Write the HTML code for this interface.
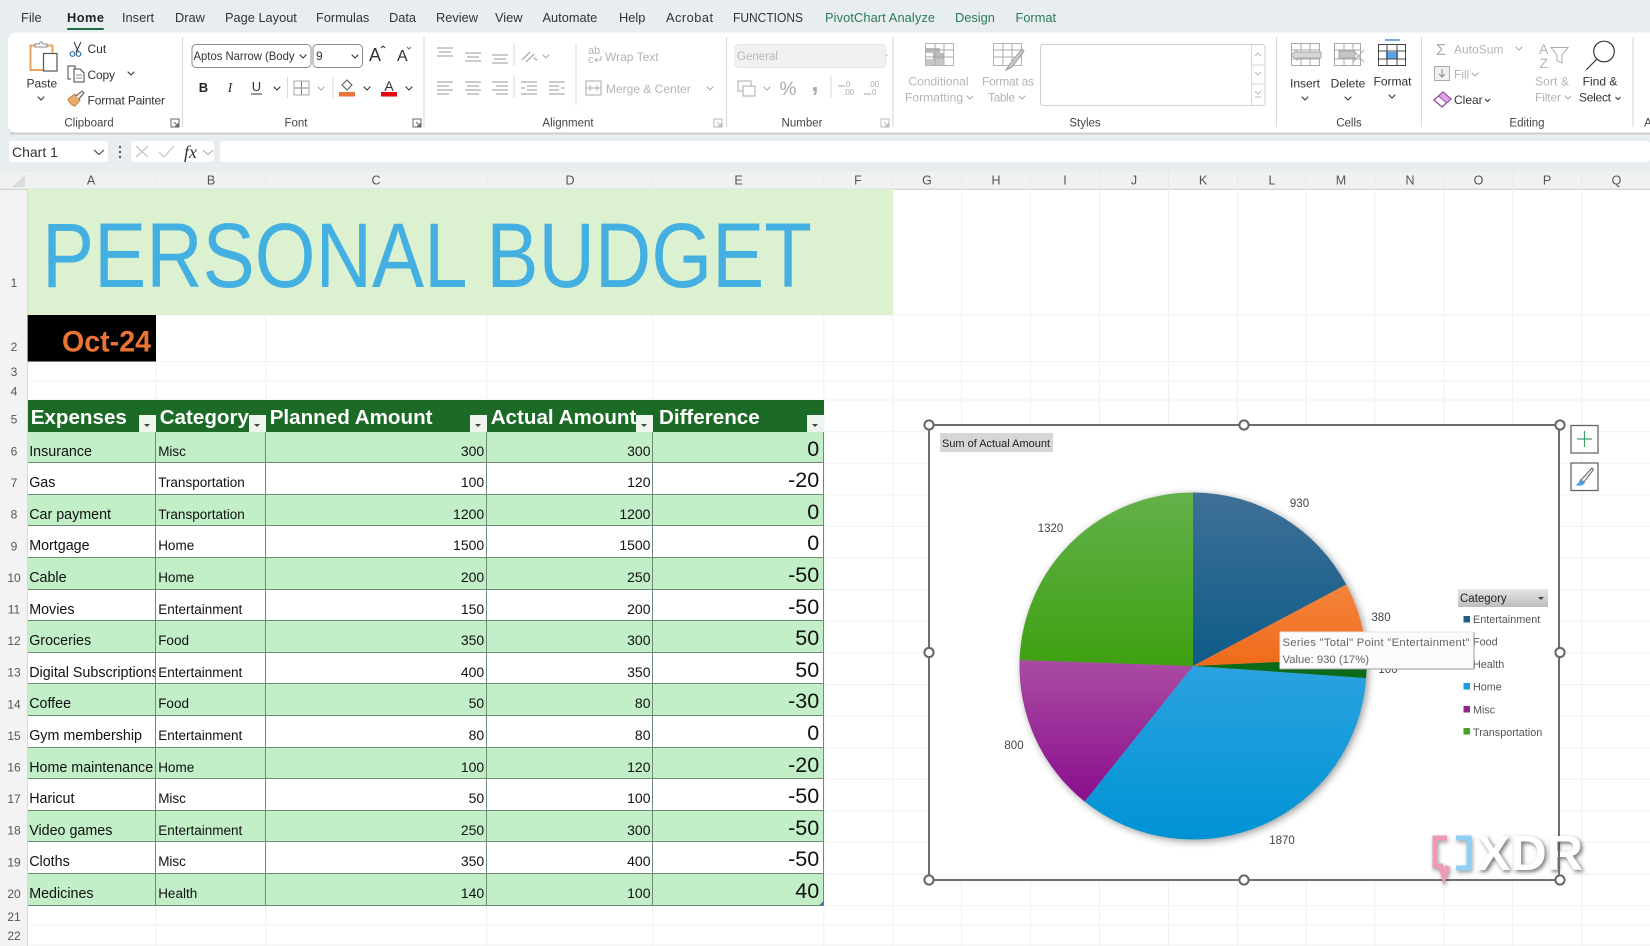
<!DOCTYPE html>
<html lang="en"><head><meta charset="utf-8"><title>Personal Budget</title>
<style>
html,body{margin:0;padding:0;width:1650px;height:946px;overflow:hidden;background:#fff;font-family:"Liberation Sans",sans-serif}
svg{position:absolute;left:0;top:0}
svg text{font-family:"Liberation Sans",sans-serif}
#tbl{position:absolute;left:27.7px;top:400px;display:grid;grid-template-columns:128px 110px 221px 166.3px 170.7px;grid-auto-rows:31.6px;color:#111}
#tbl div{box-sizing:border-box;white-space:nowrap;overflow:hidden;border-right:1px solid #6f8a72;border-bottom:1px solid #6f8a72;font-size:14.3px;line-height:40px;padding-left:1.5px}
#tbl .h{background:#1b6a25;color:#fff;font-weight:bold;font-size:20.6px;line-height:36px;border:0;padding-left:3px;height:31.7px;position:relative;overflow:visible}
#tbl .h.p{padding-left:4px}
#tbl .h.q{padding-left:6px}
#tbl .h i{position:absolute;right:0;bottom:0;width:16.5px;height:17px;background:#eef5ef}
#tbl .h i:after{content:"";position:absolute;left:5px;top:9px;border:3px solid transparent;border-top:3px solid #444}
#tbl .g{background:#c2eec8}
#tbl .c{font-size:13.5px;padding-left:2.5px;line-height:40px}
#tbl .n{text-align:right;padding:0 1.5px 0 0;font-size:14px;line-height:38px}
#tbl .d{text-align:right;padding:0 3.5px 0 0;font-size:21.5px;line-height:35px}
</style></head><body>

<svg width="1650" height="946" viewBox="0 0 1650 946" style="z-index:1">
<!-- chrome -->
<rect x="0" y="0" width="1650" height="172" fill="#e8edf0"/>
<rect x="0" y="172" width="1650" height="17" fill="#f0f2f2"/>
<rect x="0" y="189" width="27.7" height="757" fill="#f3f3f3"/>
<path d="M25 175V187H12Z" fill="#dcdcdc"/>
<path d="M0 189.3H1650" stroke="#c6cbc9" stroke-width="1"/>
<path d="M27.5 189V946" stroke="#d6d6d6"/>
<!-- grid -->
<path d="M28 315H1650M28 361.5H1650M28 381H1650M28 400H1650M824 431.7H1650M824 463.3H1650M824 494.9H1650M824 526.5H1650M824 558.1H1650M824 589.7H1650M824 621.3H1650M824 652.9H1650M824 684.5H1650M824 716.1H1650M824 747.7H1650M824 779.3H1650M824 810.9H1650M824 842.5H1650M824 874.1H1650M28 905.7H1650M28 925H1650M28 945H1650M156 315V400M156 906V946M265.8 315V400M265.8 906V946M486.8 315V400M486.8 906V946M652.7 315V400M652.7 906V946M823.8 315V946M892.8 189V946M961.6 189V946M1030.5 189V946M1099.5 189V946M1168.5 189V946M1237.5 189V946M1306.2 189V946M1375 189V946M1444 189V946M1512.7 189V946M1581.7 189V946" stroke="#f1f1f1" stroke-width="1" fill="none"/>
<path d="M156 172V189M265.8 172V189M486.8 172V189M652.7 172V189M823.8 172V189M892.8 172V189M961.6 172V189M1030.5 172V189M1099.5 172V189M1168.5 172V189M1237.5 172V189M1306.2 172V189M1375 172V189M1444 172V189M1512.7 172V189M1581.7 172V189" stroke="#e7e9e9"/>
<!-- column letters -->
<g font-size="12.5" fill="#555" text-anchor="middle">
<text x="91" y="184.5">A</text><text x="211" y="184.5">B</text><text x="376" y="184.5">C</text><text x="570" y="184.5">D</text><text x="738.5" y="184.5">E</text><text x="858" y="184.5">F</text><text x="927" y="184.5">G</text><text x="996" y="184.5">H</text><text x="1065" y="184.5">I</text><text x="1134" y="184.5">J</text><text x="1203" y="184.5">K</text><text x="1272" y="184.5">L</text><text x="1341" y="184.5">M</text><text x="1410" y="184.5">N</text><text x="1478.5" y="184.5">O</text><text x="1547" y="184.5">P</text><text x="1616.5" y="184.5">Q</text>
</g>
<!-- row numbers -->
<g font-size="12" fill="#555" text-anchor="middle">
<text x="14" y="287">1</text><text x="14" y="351">2</text><text x="14" y="376">3</text><text x="14" y="395.5">4</text><text x="14" y="423.5">5</text>
<text x="14" y="455.5">6</text><text x="14" y="487">7</text><text x="14" y="518.7">8</text><text x="14" y="550.3">9</text><text x="14" y="581.9">10</text><text x="14" y="613.5">11</text><text x="14" y="645.1">12</text><text x="14" y="676.7">13</text><text x="14" y="708.3">14</text><text x="14" y="739.9">15</text><text x="14" y="771.5">16</text><text x="14" y="803.1">17</text><text x="14" y="834.7">18</text><text x="14" y="866.3">19</text><text x="14" y="897.9">20</text><text x="14" y="921">21</text><text x="14" y="940">22</text>
</g>
<!-- title -->
<rect x="27.7" y="189" width="865" height="126" fill="#dcf1d0"/>
<text x="42" y="287" font-size="92" fill="#44b0e2" textLength="770" lengthAdjust="spacingAndGlyphs">PERSONAL BUDGET</text>
<rect x="27.7" y="315" width="128.3" height="46.5" fill="#000"/>
<text x="62" y="351.7" font-size="30" font-weight="bold" fill="#ea7434" textLength="89" lengthAdjust="spacingAndGlyphs">Oct-24</text>

<!-- tabs -->
<g font-size="12.8" fill="#333">
<text x="21" y="22">File</text><text x="67" y="22" font-weight="bold" fill="#222" textLength="37">Home</text><text x="122" y="22">Insert</text><text x="175" y="22">Draw</text><text x="225" y="22">Page Layout</text><text x="316" y="22">Formulas</text><text x="389" y="22">Data</text><text x="436" y="22">Review</text><text x="495" y="22">View</text><text x="542.5" y="22">Automate</text><text x="619" y="22">Help</text><text x="666" y="22" textLength="47">Acrobat</text><text x="733" y="22" textLength="70" lengthAdjust="spacingAndGlyphs">FUNCTIONS</text>
<g fill="#2c7a57"><text x="825" y="22" textLength="110">PivotChart Analyze</text><text x="955" y="22">Design</text><text x="1015.5" y="22">Format</text></g>
</g>
<rect x="67" y="28" width="37" height="2" rx="1" fill="#1d6b40"/>
<!-- ribbon -->
<rect x="10" y="132" width="1640" height="2.5" fill="#ccd0d2"/>
<rect x="8" y="32.5" width="1660" height="100" rx="8" fill="#fff"/>
<path d="M182.5 37V127M424 37V127M726.5 37V127M893 37V127M1276.5 37V127M1421.5 37V127M1633 37V127" stroke="#dcdcdc" stroke-width="1.2"/>
<path d="M287.5 77V98M333 77V98M514 43V66M514 76V98M576 43V105M831 76V98" stroke="#dadada" stroke-width="1"/>
<!-- clipboard icons -->
<path d="M36 45.5H30.5V70H43" fill="none" stroke="#e5a65c" stroke-width="2"/><path d="M47 45.5H52.5V53" fill="none" stroke="#e5a65c" stroke-width="2"/>
<path d="M35 47V44H39Q41 40 43 44H47V47Z" fill="#fff" stroke="#8a8a8a"/>
<rect x="43.5" y="53.5" width="13.5" height="17.5" fill="#fff" stroke="#555" stroke-width="1.2"/>
<path d="M74 42L78.5 52M81 42L76 52" stroke="#333" fill="none"/><circle cx="72.5" cy="54" r="2.3" fill="none" stroke="#2d6da8" stroke-width="1.2"/><circle cx="78.5" cy="54" r="2.3" fill="none" stroke="#2d6da8" stroke-width="1.2"/>
<path d="M71 79H68V66H75V69M74 69H80L84 73V82H74Z" fill="#fff" stroke="#444"/><path d="M76 75H82M76 78H82" stroke="#888"/>
<path d="M68 99L75 94L80 100L75 106Q70 105 68 99Z" fill="#e9ad6a" stroke="#c9792f"/><path d="M76 96L82 91L84 93L79 99" fill="#eee" stroke="#555"/>
<g font-size="12" fill="#333">
<text x="26.5" y="87.5">Paste</text><text x="87.5" y="53">Cut</text><text x="87.5" y="79" textLength="27.5">Copy</text><text x="87.5" y="104.5" textLength="77.5">Format Painter</text>
</g>
<!-- labels -->
<g font-size="11.5" fill="#444" text-anchor="middle">
<text x="89" y="126.5">Clipboard</text><text x="296" y="126.5">Font</text><text x="568" y="126.5">Alignment</text><text x="802" y="126.5">Number</text><text x="1085" y="126.5">Styles</text><text x="1349" y="126.5">Cells</text><text x="1527" y="126.5">Editing</text><text x="1648" y="126.5">A</text>
</g>
<!-- launchers -->
<g fill="none" stroke-width="1"><path d="M171 119H179V127H171ZM174 122L178 126M178 123V126H175" stroke="#666"/><path d="M413 119H421V127H413ZM416 122L420 126M420 123V126H417" stroke="#666"/><path d="M714 119H722V127H714ZM717 122L721 126M721 123V126H718" stroke="#bbb"/><path d="M881 119H889V127H881ZM884 122L888 126M888 123V126H885" stroke="#bbb"/></g>
<!-- font -->
<rect x="192" y="44.5" width="119" height="23" rx="4" fill="#fff" stroke="#8c8c8c"/><rect x="313" y="44.5" width="49.5" height="23" rx="4" fill="#fff" stroke="#8c8c8c"/>
<text x="193.5" y="60" font-size="12" fill="#333" textLength="101" lengthAdjust="spacingAndGlyphs">Aptos Narrow (Body</text><text x="316" y="60" font-size="12" fill="#333">9</text>
<g fill="none" stroke="#333" stroke-width="1.1" stroke-linecap="round"><path d="M300 55l3 3l3-3M352 55l3 3l3-3M128 72l3 3l3-3M38 97l3 3l3-3M274 87l3 3l3-3M364 87l3 3l3-3M406 87l3 3l3-3M1302 97l3 3l3-3M1345 97l3 3l3-3M1389 95l3 3l3-3"/></g>
<g fill="none" stroke="#aaa" stroke-width="1" stroke-linecap="round"><path d="M318 87l3 3l3-3M543 55l3 3l3-3M707 87l3 3l3-3M764 87l3 3l3-3M881 55l3 3l3-3M1516 47l3 3l3-3M1472 73l3 3l3-3M967 96l3 3l3-3M1019 96l3 3l3-3M1565 96l3 3l3-3"/></g>
<text x="369" y="61" font-size="18" fill="#333">A</text><text x="397" y="61" font-size="16" fill="#333">A</text>
<path d="M381 48l2-2l2 2" stroke="#333" fill="none"/><path d="M407 47l2 2l2-2" stroke="#3a7ca5" fill="none"/>
<text x="203.5" y="92" font-size="13" font-weight="bold" fill="#222" text-anchor="middle">B</text><text x="230" y="92" font-size="14" font-style="italic" fill="#333" text-anchor="middle" style="font-family:'Liberation Serif',serif">I</text><text x="256.5" y="91" font-size="13" fill="#333" text-anchor="middle">U</text><path d="M251 94H262" stroke="#333"/>
<rect x="294" y="81" width="15" height="14" fill="none" stroke="#aaa"/><path d="M301.5 81V95M294 88H309" stroke="#888"/>
<path d="M342 85L347 80L352 85L347 90Z" fill="#fff" stroke="#555"/><rect x="339" y="92" width="16" height="4.5" fill="#e8743a"/>
<text x="389" y="91" font-size="14" fill="#333" text-anchor="middle">A</text><rect x="381" y="92" width="16" height="4.5" fill="#e60012"/>
<!-- alignment -->
<g stroke="#999" stroke-width="1.1" fill="none">
<path d="M437 48H453M439 52H451M437 56H453"/><path d="M465 53H481M467 57H479M465 61H481"/><path d="M492 55H508M494 59H506M492 63H508"/>
<path d="M437 82H453M437 86H449M437 90H453M437 94H449"/><path d="M465 82H481M467 86H479M465 90H481M467 94H479"/><path d="M492 82H508M496 86H508M492 90H508M496 94H508"/>
<path d="M521 82H537M527 86H537M527 90H537M521 94H537M525 88H521"/><path d="M549 82H565M549 86H559M549 90H559M549 94H565M561 88H565"/>
<path d="M522 60L530 52M526 62L534 54M534 58L537 60"/>
</g>
<g fill="#b4b4b4" font-size="12"><text x="605" y="61">Wrap Text</text><text x="606" y="93">Merge &amp; Center</text><text x="588" y="54" font-size="11">ab</text><text x="588" y="63" font-size="11">c</text></g>
<path d="M595 60H601V56M595 60l2-2M595 60l2 2" stroke="#b4b4b4" fill="none"/>
<rect x="586" y="81" width="15" height="14" fill="none" stroke="#aaa"/><path d="M586 88H601M590 85V91M597 85V91" stroke="#aaa"/>
<!-- number -->
<rect x="735" y="44.5" width="150.5" height="23" rx="4" fill="#f1f1f1" stroke="#e6e6e6"/>
<text x="737" y="60" font-size="11.5" fill="#b8b8b8">General</text>
<rect x="738" y="81" width="13" height="10" fill="none" stroke="#aaa"/><rect x="743" y="86" width="12" height="10" fill="#fff" stroke="#aaa"/>
<text x="788" y="95" font-size="19" fill="#aaa" text-anchor="middle">%</text><text x="815" y="91" font-size="26" font-weight="bold" fill="#aaa" text-anchor="middle">,</text>
<g font-size="8" fill="#aaa"><text x="846" y="87">0</text><text x="843" y="95">.00</text><text x="868" y="87">.00</text><text x="872" y="95">0</text></g><path d="M838 86H845M864 94H871" stroke="#aaa"/>
<!-- styles -->
<g fill="#dcdcdc" stroke="#b5b5b5"><rect x="925.5" y="43.5" width="28" height="22" fill="#fff"/><rect x="926" y="48" width="14" height="5" stroke="none" fill="#bbb"/><rect x="933" y="53" width="11" height="6" stroke="none" fill="#bbb"/><rect x="926" y="59" width="18" height="6" stroke="none" fill="#c8c8c8"/></g>
<path d="M925 50H953M925 57H953M935 44V66M944 44V66" stroke="#aaa" fill="none"/>
<rect x="993.5" y="43.5" width="28" height="22" fill="#fff" stroke="#b5b5b5"/><path d="M993 50H1021M993 57H1021M1003 44V66M1012 44V66" stroke="#aaa"/><path d="M1006 70L1010 64L1022 49L1024 51L1012 67Z" fill="#ccc" stroke="#999"/>
<g font-size="12" fill="#b4b4b4" text-anchor="middle"><text x="938.5" y="85.5" textLength="60">Conditional</text><text x="934" y="101.5" textLength="58">Formatting</text><text x="1008" y="85.5" textLength="52">Format as</text><text x="1001.5" y="101.5" textLength="27">Table</text></g>
<rect x="1040.5" y="44.5" width="224.5" height="61" rx="3" fill="#fff" stroke="#cfcfcf"/>
<path d="M1251.5 45V105M1252 65H1265M1252 84H1265" stroke="#d8d8d8" fill="none"/><g fill="none" stroke="#bbb"><path d="M1255 56l3-3l3 3M1255 72l3 3l3-3M1255 91l3 3l3-3M1255 97H1261"/></g>
<!-- cells -->
<g stroke="#a8a8a8" fill="none"><rect x="1291.5" y="43.5" width="28" height="22"/><path d="M1291 50H1319M1291 59H1319M1301 44V66M1310 44V66"/><path d="M1291 55L1297 50V52H1321V58H1297V60Z" fill="#d6d6d6"/>
<rect x="1334.5" y="43.5" width="26" height="22"/><path d="M1334 50H1360M1334 59H1360M1344 44V66M1353 44V66"/><rect x="1339" y="51" width="16" height="7" fill="#c4c4c4"/><path d="M1353 50L1364 62M1364 50L1353 62" stroke="#aaa"/></g>
<rect x="1378.5" y="44.5" width="27" height="21" fill="#fff" stroke="#444"/><rect x="1386" y="52" width="12" height="7" fill="#57a3ec"/><path d="M1378 51H1406M1378 59H1406M1387 45V66M1397 45V66" stroke="#444"/><path d="M1385 40H1400" stroke="#3a78b8" stroke-width="1.3"/>
<g font-size="12" fill="#333" text-anchor="middle"><text x="1305" y="87.5">Insert</text><text x="1348" y="87.5">Delete</text><text x="1392.5" y="85.5">Format</text><text x="1600" y="85.5">Find &amp;</text><text x="1595" y="101.5" textLength="32">Select</text></g>
<path d="M1615.5 97l2.5 2.5l2.5-2.5" stroke="#333" fill="none"/>
<!-- editing -->
<text x="1436" y="55" font-size="16" fill="#aaa">Σ</text>
<g font-size="12" fill="#b4b4b4"><text x="1454" y="53.5">AutoSum</text><text x="1454" y="78.5">Fill</text></g>
<rect x="1434.5" y="66.5" width="15" height="14" fill="#f0f0f0" stroke="#aaa"/><path d="M1442 69V76M1439 74l3 3l3-3" stroke="#888" fill="none"/>
<path d="M1434 100L1443 92L1451 99L1442 107Z" fill="#fff" stroke="#9a4fb0" stroke-width="1.4"/><path d="M1438.5 96L1443 92L1451 99L1446.5 103Z" fill="#dba6e3" stroke="#9a4fb0"/>
<text x="1454" y="104" font-size="12" fill="#333">Clear</text><path d="M1485 99l2.5 2.5l2.5-2.5" stroke="#333" fill="none"/>
<g font-size="14" fill="#b4b4b4"><text x="1539" y="54">A</text><text x="1539.5" y="68">Z</text></g>
<path d="M1551 47.5H1568L1562 55V63L1557 60.5V55Z" fill="#fff" stroke="#aaa"/>
<g font-size="12" fill="#b4b4b4" text-anchor="middle"><text x="1552" y="85.5" textLength="34">Sort &amp;</text><text x="1548" y="101.5" textLength="26">Filter</text></g>
<circle cx="1604" cy="51.5" r="10.3" fill="none" stroke="#333" stroke-width="1.2"/><path d="M1597 59L1586 70" stroke="#333" stroke-width="1.2"/>
<!-- formula bar -->
<rect x="9" y="141" width="99" height="21" rx="3" fill="#fff"/><rect x="131" y="141" width="83" height="21" rx="3" fill="#fff"/><rect x="220" y="141" width="1430" height="21" rx="3" fill="#fff"/>
<text x="12" y="157" font-size="14" fill="#333">Chart 1</text><path d="M94 150l5 4.5l5-4.5" fill="none" stroke="#555" stroke-width="1.2"/>
<circle cx="120" cy="147" r="1.1" fill="#444"/><circle cx="120" cy="152" r="1.1" fill="#444"/><circle cx="120" cy="157" r="1.1" fill="#444"/>
<path d="M136 146L148 157M148 146L136 157" stroke="#c4c4c4" stroke-width="1.2"/><path d="M159 152L164 157L174 146" fill="none" stroke="#c4c4c4" stroke-width="1.2"/>
<text x="184" y="158" font-size="18" font-style="italic" fill="#333" style="font-family:'Liberation Serif',serif">fx</text><path d="M203 150l5 4.5l5-4.5" fill="none" stroke="#aaa"/>
</svg>

<div id="tbl" style="z-index:2">
<div class="h">Expenses<i></i></div><div class="h p">Category<i></i></div><div class="h p">Planned Amount<i></i></div><div class="h p">Actual Amount<i></i></div><div class="h q">Difference<i></i></div>
<div class="g">Insurance</div><div class="g c">Misc</div><div class="g n">300</div><div class="g n">300</div><div class="g d">0</div>
<div>Gas</div><div class="c">Transportation</div><div class="n">100</div><div class="n">120</div><div class="d">-20</div>
<div class="g">Car payment</div><div class="g c">Transportation</div><div class="g n">1200</div><div class="g n">1200</div><div class="g d">0</div>
<div>Mortgage</div><div class="c">Home</div><div class="n">1500</div><div class="n">1500</div><div class="d">0</div>
<div class="g">Cable</div><div class="g c">Home</div><div class="g n">200</div><div class="g n">250</div><div class="g d">-50</div>
<div>Movies</div><div class="c">Entertainment</div><div class="n">150</div><div class="n">200</div><div class="d">-50</div>
<div class="g">Groceries</div><div class="g c">Food</div><div class="g n">350</div><div class="g n">300</div><div class="g d">50</div>
<div>Digital Subscriptions</div><div class="c">Entertainment</div><div class="n">400</div><div class="n">350</div><div class="d">50</div>
<div class="g">Coffee</div><div class="g c">Food</div><div class="g n">50</div><div class="g n">80</div><div class="g d">-30</div>
<div>Gym membership</div><div class="c">Entertainment</div><div class="n">80</div><div class="n">80</div><div class="d">0</div>
<div class="g">Home maintenance</div><div class="g c">Home</div><div class="g n">100</div><div class="g n">120</div><div class="g d">-20</div>
<div>Haricut</div><div class="c">Misc</div><div class="n">50</div><div class="n">100</div><div class="d">-50</div>
<div class="g">Video games</div><div class="g c">Entertainment</div><div class="g n">250</div><div class="g n">300</div><div class="g d">-50</div>
<div>Cloths</div><div class="c">Misc</div><div class="n">350</div><div class="n">400</div><div class="d">-50</div>
<div class="g">Medicines</div><div class="g c">Health</div><div class="g n">140</div><div class="g n">100</div><div class="g d">40</div>
</div>

<svg width="1650" height="946" viewBox="0 0 1650 946" style="z-index:3">
<defs>
<linearGradient id="a" x1="0" y1="0" x2="0" y2="1"><stop offset="0" stop-color="#3f7097"/><stop offset="1" stop-color="#0d5c88"/></linearGradient>
<linearGradient id="b" x1="0" y1="0" x2="0" y2="1"><stop offset="0" stop-color="#f5853d"/><stop offset="1" stop-color="#ef6a1a"/></linearGradient>
<linearGradient id="c" x1="0" y1="0" x2="0" y2="1"><stop offset="0" stop-color="#2ba2e0"/><stop offset="1" stop-color="#0093d4"/></linearGradient>
<linearGradient id="d" x1="0" y1="0" x2="0" y2="1"><stop offset="0" stop-color="#aa4ca2"/><stop offset="1" stop-color="#8a0e8e"/></linearGradient>
<linearGradient id="e" x1="0" y1="0" x2="0" y2="1"><stop offset="0" stop-color="#63b14b"/><stop offset="1" stop-color="#3ea011"/></linearGradient>
<linearGradient id="f" x1="0" y1="0" x2="0" y2="1"><stop offset="0" stop-color="#e6e6e6"/><stop offset="1" stop-color="#bdbdbd"/></linearGradient>
</defs>
<path d="M823.5 901V905.5H819Z" fill="#3a78a8"/>
<rect x="929" y="425" width="630" height="455" fill="#fff" stroke="#6e6e6e" stroke-width="2"/>
<rect x="940" y="433" width="113" height="19" fill="#d6d6d6"/>
<text x="942" y="447" font-size="11" fill="#222" textLength="108">Sum of Actual Amount</text>
<g style="filter:drop-shadow(2px 2px 4px rgba(0,0,0,.4))">
<path d="M1193 666V492.5A173.5 173.5 0 0 1 1346.2 584.5Z" fill="url(#a)"/>
<path d="M1193 666L1346.2 584.5A173.5 173.5 0 0 1 1366.3 657.9Z" fill="url(#b)"/>
<path d="M1193 666L1366.3 657.9A173.5 173.5 0 0 1 1366.1 678.1Z" fill="#0a6a18"/>
<path d="M1193 666L1366.1 678.1A173.5 173.5 0 0 1 1084.6 801.5Z" fill="url(#c)"/>
<path d="M1193 666L1084.6 801.5A173.5 173.5 0 0 1 1019.6 660Z" fill="url(#d)"/>
<path d="M1193 666L1019.6 660A173.5 173.5 0 0 1 1193 492.5Z" fill="url(#e)"/>
</g>
<g font-size="11.5" fill="#444" text-anchor="middle">
<text x="1299.5" y="507">930</text><text x="1050.5" y="532">1320</text><text x="1381" y="621">380</text><text x="1388" y="673">100</text><text x="1014" y="749">800</text><text x="1282" y="844">1870</text>
</g>
<!-- legend -->
<rect x="1458" y="589" width="90" height="18" fill="url(#f)"/>
<text x="1460" y="602" font-size="11.5" fill="#222">Category</text><path d="M1538 597H1544L1541 600Z" fill="#444"/>
<g><rect x="1463.5" y="616" width="6.5" height="6.5" fill="#1f5f8b"/><rect x="1463.5" y="638" width="6.5" height="6.5" fill="#f0762a"/><rect x="1463.5" y="661" width="6.5" height="6.5" fill="#0a6a18"/><rect x="1463.5" y="683" width="6.5" height="6.5" fill="#1a9fdc"/><rect x="1463.5" y="706" width="6.5" height="6.5" fill="#94268f"/><rect x="1463.5" y="728" width="6.5" height="6.5" fill="#46a22a"/></g>
<g font-size="10.8" fill="#555"><text x="1473" y="623">Entertainment</text><text x="1473" y="645.5">Food</text><text x="1473" y="668">Health</text><text x="1473" y="690.5">Home</text><text x="1473" y="713.5">Misc</text><text x="1473" y="736">Transportation</text></g>
<!-- tooltip -->
<rect x="1280" y="632" width="194" height="37" fill="#fbfbfb"/><path d="M1474 632V669H1280" fill="none" stroke="#9a9a9a" stroke-width="1"/><path d="M1280 669V632H1474" fill="none" stroke="#e4e4e4" stroke-width="1"/>
<text x="1282.5" y="646" font-size="11.3" fill="#666" textLength="187">Series "Total" Point "Entertainment"</text>
<text x="1282.5" y="663" font-size="11.3" fill="#666">Value: 930 (17%)</text>
<!-- handles -->
<g fill="#fff" stroke="#666" stroke-width="2"><circle cx="929" cy="425" r="4.6"/><circle cx="1244" cy="425" r="4.6"/><circle cx="1560" cy="425" r="4.6"/><circle cx="929" cy="652.5" r="4.6"/><circle cx="1560" cy="652.5" r="4.6"/><circle cx="929" cy="880" r="4.6"/><circle cx="1244" cy="880" r="4.6"/><circle cx="1560" cy="880" r="4.6"/></g>
<!-- side buttons -->
<rect x="1571" y="425.5" width="27" height="27.5" fill="#fff" stroke="#666" stroke-width="1.3"/><path d="M1584.5 431V447M1577 439H1592" stroke="#3fa46a" stroke-width="1.2"/>
<rect x="1571" y="463" width="27" height="27.5" fill="#fff" stroke="#666" stroke-width="1.3"/><path d="M1581 480L1592 468L1593.5 469.5L1584 482Z" fill="#eee" stroke="#666"/><path d="M1575 485Q1579 484 1580 479L1585 483Q1582 487 1575 485Z" fill="#4f9fe0"/>
<!-- watermark -->
<g style="filter:drop-shadow(1px 2px 2px rgba(90,90,90,.6))">
<path d="M1447 838H1435V866H1441L1444 877L1448 866" fill="none" stroke="#ee9ab5" stroke-width="5"/>
<path d="M1456 838H1469V868H1456" fill="none" stroke="#8fd0f2" stroke-width="5"/>
</g>
<text x="1477" y="870" font-size="49" font-weight="bold" fill="#fff" textLength="106" lengthAdjust="spacingAndGlyphs" style="filter:drop-shadow(2px 2px 2px rgba(80,80,80,.8))">XDR</text>
<path d="M1559 850V875" stroke="#6e6e6e" stroke-width="2"/>
</svg>
</body></html>
